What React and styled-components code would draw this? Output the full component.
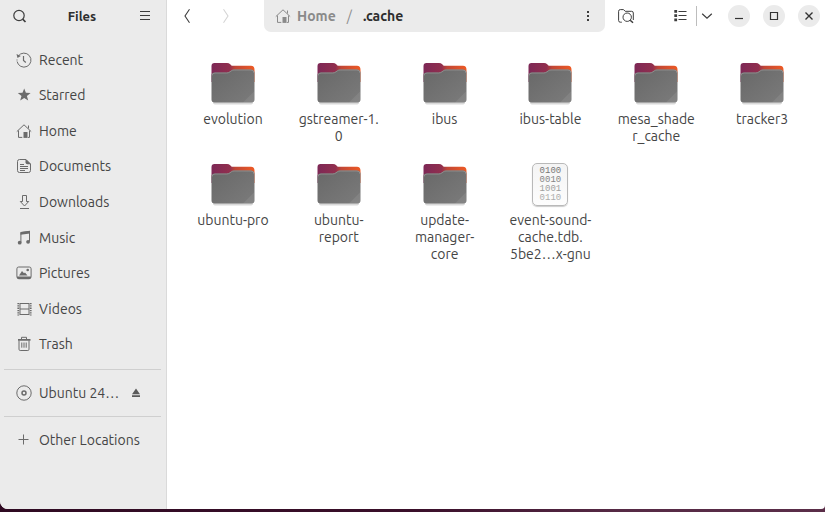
import React from 'react';
import styled, { createGlobalStyle } from 'styled-components';

const GlobalStyle = createGlobalStyle`
  * {
    box-sizing: border-box;
  }

  body {
    margin: 0;
    background: #4a2038;
    color: #3d3d3d;
    font-family: "Ubuntu", "Noto Sans", sans-serif;
    font-size: 14px;
  }

  button {
    font: inherit;
    color: inherit;
    border: none;
    background: none;
    padding: 0;
    cursor: pointer;
  }
`;

const Desktop = styled.div`
  min-height: 100vh;
  display: flex;
  padding-bottom: 3px;
  background: linear-gradient(90deg, #2f0a22 0%, #3a0f2a 50%, #562a45 75%, #5a2d48 100%);
`;

const Window = styled.div`
  flex: 1;
  display: flex;
  min-width: 0;
  background: #fff;
  border-radius: 0 0 4px 8px;
  overflow: hidden;
`;

const Sidebar = styled.aside`
  flex: 0 0 167px;
  background: #ebebeb;
  border-right: 1px solid #dadada;
`;

const SidebarHeader = styled.header`
  display: flex;
  align-items: center;
  justify-content: space-between;
  height: 32px;
  padding: 0 11px 0 9px;
`;

const Title = styled.h1`
  margin: 0;
  font-size: 13px;
  font-weight: 700;
  color: #2e2e2e;
`;

const IconButton = styled.button`
  display: flex;
  align-items: center;
  justify-content: center;
  flex: none;
  width: ${props => props.$width || 20}px;
  height: 32px;
  color: #3d3d3d;

  &:disabled {
    color: #d4d4d4;
  }
`;

const Places = styled.nav`
  padding-top: 10px;
`;

const PlaceList = styled.ul`
  display: grid;
  grid-auto-rows: 1fr;
  height: 320px;
  margin: 0;
  padding: 0;
  list-style: none;
`;

const PlaceItem = styled.li`
  display: flex;
`;

const PlaceRow = styled.div`
  display: flex;
  align-items: center;
  height: 33px;
  padding-right: 20px;
`;

const PlaceLink = styled.a`
  display: flex;
  align-items: center;
  flex: 1;
  gap: 7px;
  min-width: 0;
  padding-left: 16px;
  color: #454545;
  text-decoration: none;
  white-space: nowrap;

  svg {
    flex: none;
    color: #6b6b6b;
  }
`;

const Separator = styled.hr`
  height: 1px;
  margin: 7px 5px 6px 4px;
  border: none;
  background: #cfcfcf;
`;

const Main = styled.main`
  flex: 1;
  min-width: 0;
`;

const Toolbar = styled.header`
  display: flex;
  align-items: center;
  height: 32px;
  padding: 0 5px;
`;

const NavButtons = styled.div`
  display: flex;
  gap: 9px;
  margin-right: 23px;
`;

const PathBar = styled.div`
  display: flex;
  align-items: center;
  flex: 1;
  min-width: 0;
  height: 32px;
  margin-right: 6px;
  padding: 0 7px 0 11px;
  background: #ebebeb;
  border-radius: 0 0 7px 7px;
`;

const Crumb = styled.a`
  display: flex;
  align-items: center;
  gap: 6px;
  font-size: 14px;
  font-weight: ${props => (props.$current ? 700 : 600)};
  color: ${props => (props.$current ? '#2e2e2e' : '#8a8a8a')};
  text-decoration: none;
`;

const Slash = styled.span`
  padding: 0 11px;
  color: #8f8f8f;
`;

const Spacer = styled.div`
  flex: 1;
`;

const ViewButtons = styled.div`
  display: flex;
  align-items: center;
  margin: 0 11px 0 25px;
`;

const Divider = styled.div`
  width: 1px;
  height: 20px;
  background: #bdbdbd;
`;

const WindowButtons = styled.div`
  display: flex;
  gap: 13px;
`;

const RoundButton = styled.button`
  display: flex;
  align-items: center;
  justify-content: center;
  width: 22px;
  height: 22px;
  border-radius: 50%;
  background: #ebebeb;
  color: #333;
`;

const FileGrid = styled.div`
  display: grid;
  grid-template-columns: repeat(auto-fill, minmax(100px, 1fr));
  grid-auto-rows: minmax(101px, auto);
  padding: 30px 10px 0 13px;
`;

const FileItem = styled.button`
  display: flex;
  flex-direction: column;
  align-items: center;
  gap: 5px;
  color: #454545;
  line-height: 17px;
`;

const FileIcon = styled.div`
  display: flex;
  justify-content: center;
  width: 44px;
  height: 44px;
`;

const Line = styled.span`
  display: block;
  white-space: nowrap;
`;

const BinaryPage = styled.div`
  width: 36px;
  height: 43px;
  padding-top: 3px;
  border: 1px solid #b9b9b9;
  border-radius: 5px;
  background: linear-gradient(#f4f4f4, #fdfdfd);
  box-shadow: 0 1px 1px rgba(0, 0, 0, 0.2);
  font-family: "Liberation Mono", monospace;
  font-size: 9px;
  line-height: 9px;
  text-align: center;
`;

const Bits = styled(Line)`
  color: ${props => props.$color};
`;

const Icon = ({ size = 16, children }) => (
  <svg width={size} height={size} viewBox="0 0 16 16" fill="none" stroke="currentColor" aria-hidden="true">
    {children}
  </svg>
);

const SearchIcon = () => (
  <Icon>
    <circle cx="8" cy="7.5" r="5.2" strokeWidth="1.2" />
    <path d="M11.7 11.2l2.8 2.8" strokeWidth="1.7" />
  </Icon>
);

const MenuIcon = () => (
  <Icon>
    <path d="M3 3.5h10M3 7.5h10M3 11.5h10" strokeWidth="1.2" />
  </Icon>
);

const RecentIcon = () => (
  <Icon>
    <path d="M2.3 4A7 7 0 1 1 1.1 9.5" />
    <path d="M1 8.5v-1" />
    <path d="M0.5 2l1 4 3.3-2.1z" fill="currentColor" stroke="none" />
    <path d="M7.5 4v4.5l2.3 2" strokeWidth="1.2" />
  </Icon>
);

const StarIcon = () => (
  <Icon>
    <path
      d="M8.2 1.4l1.7 4.4 4.7.2-3.7 3 1.3 4.6-4-2.6-4 2.6 1.3-4.6-3.7-3 4.7-.2z"
      fill="currentColor"
      stroke="none"
    />
  </Icon>
);

const HomeIcon = () => (
  <Icon>
    <path d="M.8 8.6L8 1.8l7.2 6.8M2.5 7.5v6.9h3.8M13.5 7.5v6.9h-1.7M12.5 5.5v-3" />
    <path d="M7.5 9h4v5.9h-4z" fill="currentColor" stroke="none" />
  </Icon>
);

const DocumentIcon = () => (
  <Icon>
    <path d="M10 1.5H3.5a2 2 0 0 0-2 2v9a2 2 0 0 0 2 2h9a2 2 0 0 0 2-2V6z" />
    <path d="M9.5 1l5.5 5.3h-3.5a2 2 0 0 1-2-2z" fill="currentColor" stroke="none" />
    <path d="M4 6.5h4M4 8.5h8M4 10.5h8M4 12.5h5" />
  </Icon>
);

const DownloadIcon = () => (
  <Icon>
    <path d="M6.5 1.5h4v6h2.2L8.5 12 4.3 7.5h2.2zM4 14.5h9" />
  </Icon>
);

const MusicIcon = () => (
  <Icon>
    <path d="M4.9 12.5V2.6l8.6-1.1v10" />
    <path d="M4.5 2l9.5-1.2v2.7L4.5 4.8z" fill="currentColor" stroke="none" />
    <circle cx="3.7" cy="12.7" r="1.9" fill="currentColor" stroke="none" />
    <circle cx="12.1" cy="11.8" r="1.9" fill="currentColor" stroke="none" />
  </Icon>
);

const PictureIcon = () => (
  <Icon>
    <rect x=".9" y="2" width="14.2" height="11.5" rx="1.8" />
    <path d="M1 11.5h14v1a1.8 1.8 0 0 1-1.8 1.8H2.8A1.8 1.8 0 0 1 1 12.5z" fill="currentColor" stroke="none" />
    <path d="M3 10.5L6 6l2 2.3L9 7.4l2.5 3.1z" fill="currentColor" stroke="none" />
    <circle cx="11.7" cy="5" r="1.3" fill="currentColor" stroke="none" />
  </Icon>
);

const VideoIcon = () => (
  <Icon>
    <path d="M4 2v12M13 2v12M4 2.5h9M4 8h9M4 13.5h9" />
    <path d="M2.3 2v12.5M14.7 2v12.5" strokeWidth="1.8" strokeDasharray="1.3 1" />
  </Icon>
);

const TrashIcon = () => (
  <Icon>
    <path d="M2 3.8h12.5" strokeWidth="1.8" />
    <path d="M5.5 3V1.3h5V3M3 4.5v8.8q0 1.2 1.2 1.2h7.6q1.2 0 1.2-1.2V4.5M5.8 6.5v5.2M8 6.5v5.2M10.2 6.5v5.2" />
  </Icon>
);

const DiscIcon = () => (
  <Icon>
    <circle cx="8" cy="8" r="7.2" />
    <circle cx="8" cy="8" r="2" strokeWidth="1.5" />
  </Icon>
);

const PlusIcon = () => (
  <Icon>
    <path d="M2.5 7.5h10M7.5 2.5v10" />
  </Icon>
);

const EjectIcon = () => (
  <Icon>
    <path d="M8 3.5l4 5.7H4zM4 10.3h8v1.8H4z" fill="#5a5a5a" stroke="none" />
  </Icon>
);

const BackIcon = () => (
  <Icon>
    <path d="M10.5 1.3L6 8l4.5 6.7" strokeWidth="1.1" />
  </Icon>
);

const ForwardIcon = () => (
  <Icon>
    <path d="M5.5 1.3L10 8l-4.5 6.7" strokeWidth="1.1" />
  </Icon>
);

const KebabIcon = () => (
  <Icon>
    <path d="M7 3h2v2H7zM7 7h2v2H7zM7 11h2v2H7z" fill="currentColor" stroke="none" />
  </Icon>
);

const FolderSearchIcon = () => (
  <Icon>
    <path d="M3.8 14.2H2.3a1.7 1.7 0 0 1-1.7-1.7V3.3a1.7 1.7 0 0 1 1.7-1.7h3.2l1.7 1.7h6.4a1.7 1.7 0 0 1 1.7 1.7v7" />
    <circle cx="9.2" cy="9.2" r="4.2" />
    <path d="M12.2 12.2l2.8 2.6" strokeWidth="1.5" />
  </Icon>
);

const ListIcon = () => (
  <Icon>
    <path d="M5.500 3.500h8M5.500 7.500h8M5.500 11.500h8" strokeWidth="1.2" />
    <path d="M1.300 2h2.800v2.800H1.300zM1.300 6.200h2.800V9H1.300zM1.300 10.400h2.800v2.800H1.300z" fill="currentColor" stroke="none" />
  </Icon>
);

const ChevronIcon = () => (
  <Icon>
    <path d="M3.2 5.8L8 10.2l4.8-4.4" strokeWidth="1.2" />
  </Icon>
);

const FolderIcon = () => (
  <svg width="44" height="44" viewBox="0 0 44 44" aria-hidden="true">
    <defs>
      <linearGradient id="folder-back" x1="0" x2="1" y1="0" y2="0">
        <stop offset="0" stopColor="#7d2856" />
        <stop offset=".42" stopColor="#912f4e" />
        <stop offset=".55" stopColor="#c04636" />
        <stop offset="1" stopColor="#ee5a24" />
      </linearGradient>
      <linearGradient id="folder-front" x1="0" x2="1" y1="0" y2="1">
        <stop offset="0" stopColor="#686868" />
        <stop offset="1" stopColor="#7b7b7b" />
      </linearGradient>
    </defs>
    <path d="M2 39h40v1.5q0 2-3 2H5q-3 0-3-2z" fill="#000" opacity=".15" />
    <path d="M.5 4q0-3 3-3H16q2 0 3.200 1.300L20.700 3.800H40q3.500 0 3.500 4V20H.5z" fill="url(#folder-back)" />
    <path
      d="M.5 13.500q0-3 3-3H15.500q2 0 3.200-1L20.500 8.200Q21.500 7.500 23 7.500H40q3.500 0 3.500 3.500V37.500q0 3-3 3H3.500q-3 0-3-3z"
      fill="url(#folder-front)"
    />
    <path d="M1 13.500Q1 11 4 11H15.500q2 0 3.400-1.100L20.700 8.600Q21.600 8 23 8H40q3 0 3 3" fill="none" stroke="#959595" strokeWidth=".8" />
    <path d="M43.500 29v8.500q0 3-3 3h-8.500z" fill="#fff" opacity=".08" />
  </svg>
);

const BinaryIcon = () => (
  <BinaryPage aria-hidden="true">
    <Bits $color="#777">0100</Bits>
    <Bits $color="#858585">0010</Bits>
    <Bits $color="#a0a0a0">1001</Bits>
    <Bits $color="#adadad">0110</Bits>
  </BinaryPage>
);

const places = [
  { name: 'Recent', icon: RecentIcon },
  { name: 'Starred', icon: StarIcon },
  { name: 'Home', icon: HomeIcon },
  { name: 'Documents', icon: DocumentIcon },
  { name: 'Downloads', icon: DownloadIcon },
  { name: 'Music', icon: MusicIcon },
  { name: 'Pictures', icon: PictureIcon },
  { name: 'Videos', icon: VideoIcon },
  { name: 'Trash', icon: TrashIcon },
];

// labels are split the way the icon view wraps them
const files = [
  { lines: ['evolution'] },
  { lines: ['gstreamer-1.', '0'] },
  { lines: ['ibus'] },
  { lines: ['ibus-table'] },
  { lines: ['mesa_shade', 'r_cache'] },
  { lines: ['tracker3'] },
  { lines: ['ubuntu-pro'] },
  { lines: ['ubuntu-', 'report'] },
  { lines: ['update-', 'manager-', 'core'] },
  { lines: ['event-sound-', 'cache.tdb.', '5be2…x-gnu'], binary: true },
];

const Place = ({ name, icon: PlaceIcon }) => (
  <PlaceLink href="#">
    <PlaceIcon />
    {name}
  </PlaceLink>
);

const App = () => (
  <>
    <GlobalStyle />
    <Desktop>
      <Window>
        <Sidebar>
          <SidebarHeader>
            <IconButton aria-label="Search"><SearchIcon /></IconButton>
            <Title>Files</Title>
            <IconButton aria-label="Main menu"><MenuIcon /></IconButton>
          </SidebarHeader>
          <Places>
            <PlaceList>
              {places.map(place => (
                <PlaceItem key={place.name}>
                  <Place {...place} />
                </PlaceItem>
              ))}
            </PlaceList>
            <Separator />
            <PlaceRow>
              <Place name="Ubuntu 24…" icon={DiscIcon} />
              <IconButton aria-label="Eject"><EjectIcon /></IconButton>
            </PlaceRow>
            <Separator />
            <PlaceRow>
              <Place name="Other Locations" icon={PlusIcon} />
            </PlaceRow>
          </Places>
        </Sidebar>

        <Main>
          <Toolbar>
            <NavButtons>
              <IconButton $width={30} aria-label="Back"><BackIcon /></IconButton>
              <IconButton $width={30} aria-label="Forward" disabled><ForwardIcon /></IconButton>
            </NavButtons>
            <PathBar>
              <Crumb href="#"><HomeIcon />Home</Crumb>
              <Slash>/</Slash>
              <Crumb href="#" $current>.cache</Crumb>
              <Spacer />
              <IconButton aria-label="Folder menu"><KebabIcon /></IconButton>
            </PathBar>
            <IconButton $width={30} aria-label="Search folder"><FolderSearchIcon /></IconButton>
            <ViewButtons>
              <IconButton $width={30} aria-label="List view"><ListIcon /></IconButton>
              <Divider />
              <IconButton aria-label="View options"><ChevronIcon /></IconButton>
            </ViewButtons>
            <WindowButtons>
              <RoundButton aria-label="Minimize">
                <Icon><path d="M4 10.500h8" strokeWidth="1.2" /></Icon>
              </RoundButton>
              <RoundButton aria-label="Maximize">
                <Icon><path d="M4.500 4.500h7v7h-7z" strokeWidth="1.2" /></Icon>
              </RoundButton>
              <RoundButton aria-label="Close">
                <Icon><path d="M4.500 4.500l7 7M11.500 4.500l-7 7" strokeWidth="1.4" /></Icon>
              </RoundButton>
            </WindowButtons>
          </Toolbar>

          <FileGrid>
            {files.map(file => (
              <FileItem key={file.lines[0]}>
                <FileIcon>{file.binary ? <BinaryIcon /> : <FolderIcon />}</FileIcon>
                <div>
                  {file.lines.map(line => (
                    <Line key={line}>{line}</Line>
                  ))}
                </div>
              </FileItem>
            ))}
          </FileGrid>
        </Main>
      </Window>
    </Desktop>
  </>
);

export default App;
